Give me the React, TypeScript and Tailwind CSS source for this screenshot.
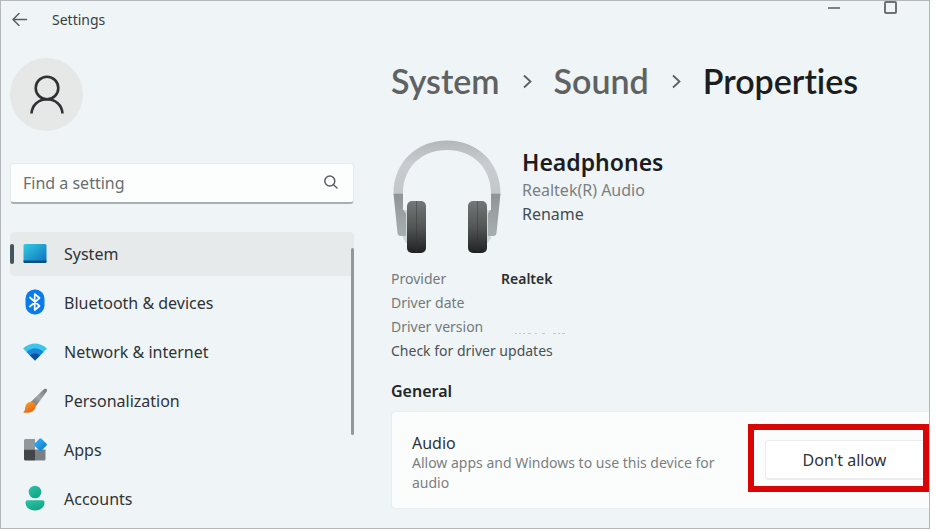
import type { ReactNode } from "react";

const BackIcon = () => (
  <svg width="16" height="14" viewBox="0 0 16 14" fill="none" stroke="#5a5e60" strokeWidth="1.5" strokeLinecap="round" strokeLinejoin="round">
    <path d="M14.500 7.500H1M7 1.500L1 7.500l6 6" />
  </svg>
);

const PersonIcon = () => (
  <svg width="36" height="40" viewBox="0 0 36 40" fill="none" stroke="#2f3133" strokeWidth="2.6">
    <circle cx="18" cy="13" r="11.300" />
    <path d="M2.500 38.500C3 30 9.500 24.300 18 24.300S33 30 33.500 38.500" />
  </svg>
);

const SearchIcon = () => (
  <svg width="16" height="16" viewBox="0 0 16 16" fill="none" stroke="#5b5f61" strokeWidth="1.5" strokeLinecap="round">
    <circle cx="6.800" cy="6" r="5" />
    <path d="M10.500 9.700L14 13" />
  </svg>
);

const SystemIcon = () => (
  <svg width="24" height="20" viewBox="0 0 24 20">
    <defs>
      <linearGradient id="sys" x1="0" y1="0" x2="1" y2="1">
        <stop offset="0" stopColor="#35cbe0" />
        <stop offset="1" stopColor="#0a6fc2" />
      </linearGradient>
    </defs>
    <rect x="0.500" y="0" width="23" height="19" rx="1.500" fill="url(#sys)" />
    <path d="M0.500 16.500h23v1a1.500 1.500 0 0 1-1.500 1.500H2A1.500 1.500 0 0 1 0.500 17.500z" fill="#0b4f80" />
  </svg>
);

const BluetoothIcon = () => (
  <svg width="20" height="28" viewBox="0 0 20 28">
    <rect x="0.500" y="0.500" width="19" height="25" rx="9" fill="#0a7bea" />
    <path d="M5 8.500l9.500 8.500-4.800 4V5l4.800 4L5 17.500" fill="none" stroke="#fff" strokeWidth="1.700" strokeLinejoin="round" strokeLinecap="round" />
  </svg>
);

const NetworkIcon = () => (
  <svg width="24" height="18" viewBox="0 0 24 18">
    <path d="M0 5.500Q12-4.500 24 5.500L12 17.500z" fill="#3cc5ea" />
    <path d="M3.500 9Q12 1.500 20.500 9L12 17.500z" fill="#1687d9" />
    <path d="M7 12.500Q12 8 17 12.500L12 17.500z" fill="#0b4f9e" />
  </svg>
);

const BrushIcon = () => (
  <svg width="26" height="26" viewBox="0 0 26 26">
    <defs>
      <linearGradient id="handle" x1="1" y1="0" x2="0" y2="1">
        <stop offset="0" stopColor="#727677" />
        <stop offset="0.500" stopColor="#a3a6a8" />
        <stop offset="1" stopColor="#686c6e" />
      </linearGradient>
      <linearGradient id="tip" x1="0" y1="0" x2="0.600" y2="1">
        <stop offset="0" stopColor="#f9a73a" />
        <stop offset="1" stopColor="#e46412" />
      </linearGradient>
    </defs>
    <path d="M24.500 1C25.300 1.500 25.200 2.700 24.600 3.700L14 18.200 8.500 14.200 21.500 1.600C22.600 0.700 23.700 0.500 24.500 1z" fill="url(#handle)" />
    <path d="M8.500 13.800C11 13 14.500 16 13.600 19.200 12.500 23.700 6 26 1 24.300 3.600 23 2.500 20.500 3.700 17.500 4.600 15.300 6.300 14.200 8.500 13.800z" fill="url(#tip)" />
  </svg>
);

const AppsIcon = () => (
  <svg width="24" height="26" viewBox="0 0 24 26">
    <defs>
      <linearGradient id="gem" x1="0" y1="0" x2="1" y2="1">
        <stop offset="0" stopColor="#3cb8f2" />
        <stop offset="1" stopColor="#0b74cf" />
      </linearGradient>
    </defs>
    <path d="M2.500 2H12v10.500H1V3.500A1.500 1.500 0 0 1 2.500 2z" fill="#92979b" />
    <path d="M12 12.500h10.500V22a1.500 1.500 0 0 1-1.500 1.500h-9z" fill="#7b8083" />
    <path d="M1 12.500h11v11H2.500A1.500 1.500 0 0 1 1 22z" fill="#424648" />
    <path d="M16.300 1.800a1.500 1.500 0 0 1 2.200 0l4.800 4.800a1.500 1.500 0 0 1 0 2.200l-4.800 4.700a1.500 1.500 0 0 1-2.200 0l-4.700-4.700a1.500 1.500 0 0 1 0-2.200z" fill="url(#gem)" />
  </svg>
);

const AccountsIcon = () => (
  <svg width="20" height="28" viewBox="0 0 20 28">
    <defs>
      <linearGradient id="acc" x1="0" y1="0" x2="0.500" y2="1">
        <stop offset="0" stopColor="#2cc4a6" />
        <stop offset="1" stopColor="#13a689" />
      </linearGradient>
    </defs>
    <circle cx="10" cy="7" r="6.300" fill="url(#acc)" />
    <path d="M2.500 15.300h15a2 2 0 0 1 2 2C19.500 22.500 15.500 25.500 10 25.500S0.500 22.500 0.500 17.300a2 2 0 0 1 2-2z" fill="url(#acc)" />
  </svg>
);

const HeadphonesImage = () => (
  <svg width="108" height="114" viewBox="0 0 108 114" role="img" aria-label="Headphones">
    <defs>
      <linearGradient id="band" x1="0" y1="0" x2="0" y2="1">
        <stop offset="0" stopColor="#b3b7ba" />
        <stop offset="0.450" stopColor="#c9cdd1" />
        <stop offset="1" stopColor="#c3c7ca" />
      </linearGradient>
      <linearGradient id="cup" x1="0" y1="0" x2="0" y2="1">
        <stop offset="0" stopColor="#747778" />
        <stop offset="0.500" stopColor="#535657" />
        <stop offset="1" stopColor="#1f2122" />
      </linearGradient>
      <linearGradient id="arm" x1="0" y1="0" x2="0" y2="1">
        <stop offset="0" stopColor="#8f9497" />
        <stop offset="1" stopColor="#a9aeb1" />
      </linearGradient>
    </defs>
    <path d="M10 70h6v33h-3l-3-5zM98 70h-6v33h3l3-5z" fill="#d3d7da" />
    <path d="M0.500 53.500C0.500 22 24 0.500 54 0.500S107.500 22 107.500 53.500H98C98 27 79 10 54 10S10 27 10 53.500z" fill="url(#band)" />
    <path d="M0.500 53.500H10v16l3 4v22.500H7.500Q5 96 4.500 93zM107.500 53.500H98v16l-3 4v22.500h5.500q2.500 0 3-3z" fill="url(#arm)" />
    <rect x="14" y="61" width="19" height="52" rx="5" fill="url(#cup)" />
    <rect x="75" y="61" width="19" height="52" rx="5" fill="url(#cup)" />
    <path d="M23.500 61v51M84.500 61v51" stroke="#303334" strokeWidth="0.800" opacity="0.500" />
  </svg>
);

const Chevron = () => (
  <svg width="14" height="16" viewBox="0 0 14 16" fill="none" stroke="#5c6062" strokeWidth="1.800" aria-hidden="true">
    <path d="M4 2.500l6.500 6-6.500 6" />
  </svg>
);

const HiddenVersion = () => (
  <svg width="54" height="4" viewBox="0 0 54 4" stroke="#c3c8ca" strokeWidth="1" aria-hidden="true">
    <path d="M0 2.500h2M4 2.500h2M8 2.500h2M13 2.500h3M20 2.500h2M27 2.500h3M38 2.500h3M43 2.500h2M47 2.500h3" />
  </svg>
);

const navItems: { label: string; icon: ReactNode }[] = [
  { label: "System", icon: <SystemIcon /> },
  { label: "Bluetooth & devices", icon: <BluetoothIcon /> },
  { label: "Network & internet", icon: <NetworkIcon /> },
  { label: "Personalization", icon: <BrushIcon /> },
  { label: "Apps", icon: <AppsIcon /> },
  { label: "Accounts", icon: <AccountsIcon /> },
];

function Sidebar() {
  return (
    <aside className="w-[344px] shrink-0 pt-[21px]">
      <div className="flex size-[73px] items-center justify-center rounded-full bg-[#e6e7e7]">
        <PersonIcon />
      </div>
      <label className="mt-8 flex h-[41px] items-center rounded-[4px] border border-b-2 border-[#e6eaeb] border-b-[#a9aeb0] bg-[#fcfefe] pr-[14px] pl-3">
        <input
          type="text"
          aria-label="Find a setting"
          placeholder="Find a setting"
          className="min-w-0 flex-1 bg-transparent text-[16px] outline-none placeholder:text-[#6a6e70]"
        />
        <SearchIcon />
      </label>
      <nav className="relative mt-7">
        <ul className="flex flex-col gap-[5px]">
          {navItems.map((item, i) => (
            <li key={item.label}>
              <a
                href="#"
                aria-current={i === 0 ? "page" : undefined}
                className={
                  i === 0
                    ? "relative flex h-11 items-center rounded-[4px] bg-[#e7eaeb] text-[16px] text-[#303335]"
                    : "relative flex h-11 items-center rounded-[4px] text-[16px] text-[#303335]"
                }
              >
                {i === 0 && <span className="absolute left-0 h-5 w-1 rounded-full bg-[#44535c]" />}
                <span className="ml-3 mr-4 flex w-[26px] justify-center">{item.icon}</span>
                {item.label}
              </a>
            </li>
          ))}
        </ul>
        <div className="absolute top-4 right-0 h-[187px] w-[3px] rounded-full bg-[#949899]" />
      </nav>
    </aside>
  );
}

export default function App() {
  return (
    <div className="h-dvh bg-white pr-[6px] pb-[3px] font-['Noto_Sans','Open_Sans',sans-serif]">
      <div className="flex h-full flex-col overflow-hidden border border-[#b5b8ba] bg-[#eff4f6]">
        <header className="flex h-9 shrink-0 items-center pl-[11px]">
          <button type="button" aria-label="Back">
            <BackIcon />
          </button>
          <span className="ml-6 flex-1 text-[14px] text-[#3a3e40]">Settings</span>
          <div className="flex items-start gap-11 self-start pr-8">
            <button type="button" aria-label="Minimize" className="flex h-[14px] items-center">
              <span className="h-[2px] w-3 bg-[#7d8182]" />
            </button>
            <button type="button" aria-label="Maximize" className="size-[13px] rounded-[2px] border-2 border-[#6d7173]" />
          </div>
        </header>
        <div className="flex min-h-0 flex-1 pl-[9px]">
          <Sidebar />
          <main className="ml-[37px] min-w-0 flex-1">
            <nav aria-label="Breadcrumb" className="mt-5 flex items-center gap-5 font-['Lato','Open_Sans',sans-serif] text-[34px] leading-[48px] font-semibold text-[#5e6263] [font-variant-ligatures:none]">
              <a href="#">System</a>
              <Chevron />
              <a href="#">Sound</a>
              <Chevron />
              <h1 className="text-[#1b1d1e]">Properties</h1>
            </nav>
            <section className="mt-[35px] flex gap-[21px] pl-[2px]">
              <HeadphonesImage />
              <div className="pt-1">
                <h2 className="text-[23px] leading-9 font-semibold text-[#1b1d1e]">Headphones</h2>
                <p className="text-[16px] leading-5 text-[#7b7f81]">Realtek(R) Audio</p>
                <button type="button" className="text-[16px] leading-7 text-[#434c55]">
                  Rename
                </button>
              </div>
            </section>
            <dl className="mt-[13px] grid grid-cols-[110px_1fr] text-[14px] leading-6 text-[#75797b]">
              <dt>Provider</dt>
              <dd className="font-semibold text-[#2c2f31]">Realtek</dd>
              <dt>Driver date</dt>
              <dd />
              <dt>Driver version</dt>
              <dd className="flex items-end pb-1 pl-[14px]">
                <HiddenVersion />
              </dd>
            </dl>
            <button type="button" className="block text-[14px] leading-6 text-[#4a5157]">
              Check for driver updates
            </button>
            <h2 className="mt-4 text-[16px] leading-6 font-semibold text-[#232627]">General</h2>
            <section className="mt-2 flex h-[98px] items-center rounded-l-[4px] border border-r-0 border-[#e8edee] bg-[#fbfdfd] pl-5">
              <div className="min-w-0 flex-1 pt-[6px]">
                <h3 className="text-[16px] leading-5 text-[#303335]">Audio</h3>
                <p className="text-[14px] leading-5 text-[#7b7f81]">Allow apps and Windows to use this device for audio</p>
              </div>
              <div className="relative ml-8 w-[164px] shrink-0">
                <button type="button" className="h-10 w-full rounded-l-[4px] border border-r-0 border-b-2 border-[#ebeded] bg-white pr-[6px] text-[16px] text-[#303335]">
                  Don't allow
                </button>
                <div className="pointer-events-none absolute -top-4 right-0 -left-[17px] h-[68px] border-6 border-[#d90404]" />
              </div>
            </section>
          </main>
        </div>
      </div>
    </div>
  );
}
